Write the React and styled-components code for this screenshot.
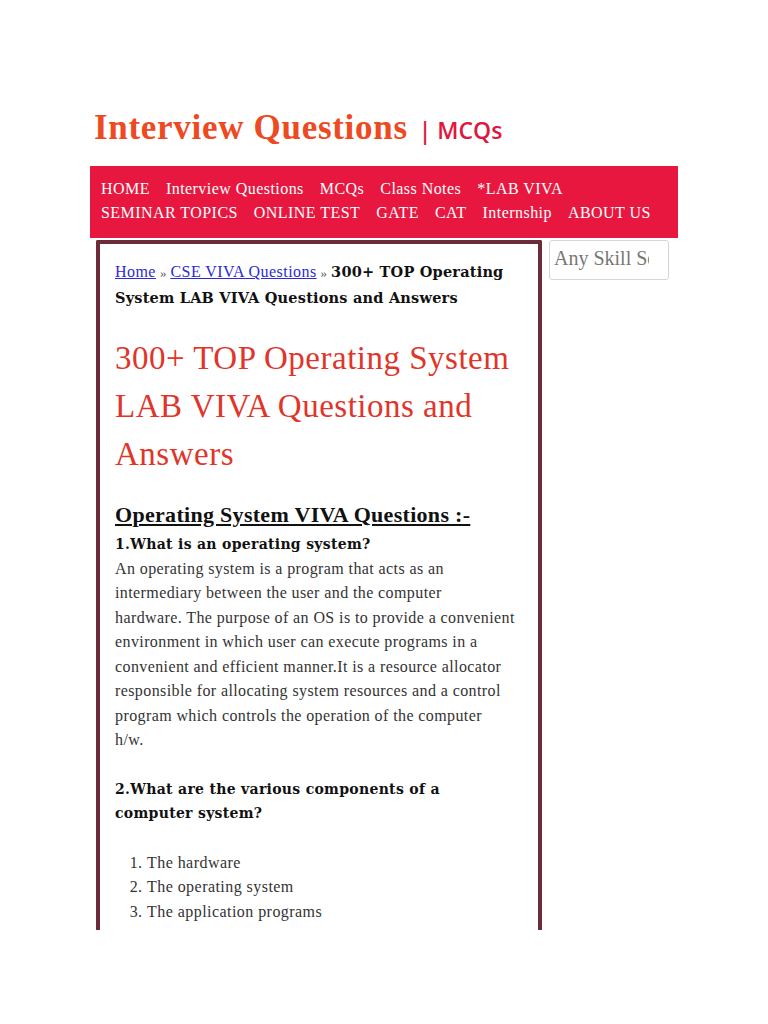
import React from "react";
import styled, { createGlobalStyle } from "styled-components";

const Global = createGlobalStyle`
  body {
    margin: 0;
    background: #ffffff;
    font-family: "Liberation Serif", serif;
  }
`;

const Page = styled.div`
  width: 768px;
  height: 930px;
  overflow: hidden;
  padding: 0 90px;
  box-sizing: border-box;
`;

const Header = styled.div`
  display: flex;
  align-items: baseline;
  padding: 108px 0 0 4px;
  height: 166px;
  box-sizing: border-box;
`;

const SiteTitle = styled.span`
  font-family: "Liberation Serif", serif;
  font-weight: bold;
  font-size: 35px;
  letter-spacing: 0.7px;
  color: #ee4a22;
`;

const Tagline = styled.span`
  font-family: "Open Sans", sans-serif;
  font-weight: 600;
  font-size: 23px;
  color: #e0163e;
  margin-left: 11px;
`;

const Nav = styled.nav`
  background: #e8173f;
  width: 588px;
  height: 72px;
  box-sizing: border-box;
  padding: 11px 10px 0 11px;
`;

const NavRow = styled.div`
  display: flex;
  column-gap: 16px;
`;

const NavItem = styled.span`
  color: #ffffff;
  font-size: 16px;
  line-height: 24px;
  letter-spacing: 0.45px;
  font-family: "Liberation Serif", serif;
  white-space: nowrap;
`;

const Body = styled.div`
  display: flex;
  align-items: flex-start;
  gap: 7px;
  padding: 2px 0 0 6px;
`;

const Card = styled.div`
  width: 446px;
  height: 720px;
  box-sizing: border-box;
  border: 4px solid #6d2a38;
  border-bottom: none;
  border-radius: 2px 2px 0 0;
  padding: 15px 16px 0 15px;
`;

const Crumbs = styled.div`
  font-size: 16px;
  line-height: 25px;
  color: #222;
`;

const Link = styled.a`
  color: #2a2ad8;
  text-decoration: underline;
  letter-spacing: 0.45px;
`;

const Sep = styled.span`
  color: #555;
  font-size: 13px;
  line-height: 25px;
`;

const Current = styled.b`
  font-family: "DejaVu Serif", serif;
  font-size: 14.5px;
  line-height: 25px;
  letter-spacing: 0.2px;
  color: #111;
`;

const Heading = styled.h1`
  font-family: "Liberation Serif", serif;
  font-weight: normal;
  font-size: 33px;
  line-height: 48px;
  letter-spacing: 0.5px;
  color: #e0352a;
  margin: 24px 0 24px;
`;

const Section = styled.h2`
  font-family: "Liberation Serif", serif;
  font-weight: bold;
  font-size: 22px;
  line-height: 26px;
  letter-spacing: 0.3px;
  text-decoration: underline;
  color: #111;
  margin: 0;
`;

const Question = styled.h3`
  font-family: "DejaVu Serif", serif;
  font-weight: bold;
  font-size: 14px;
  line-height: 24.5px;
  letter-spacing: 0.3px;
  color: #111;
  margin: ${(p) => p.$top || 0}px 0 0;
`;

const Para = styled.p`
  font-size: 16px;
  line-height: 24.5px;
  letter-spacing: 0.4px;
  color: #333;
  margin: 0;
`;

const Line = styled.span`
  display: block;
  white-space: nowrap;
`;

const List = styled.ol`
  margin: 25px 0 0;
  padding-left: 32px;
  font-size: 16px;
  line-height: 24.5px;
  letter-spacing: 0.45px;
  color: #333;
`;

const Search = styled.div`
  width: 120px;
  height: 40px;
  box-sizing: border-box;
  border: 1px solid #d6d6d6;
  border-radius: 3px;
  padding: 6px 0 0 4px;
`;

const Placeholder = styled.div`
  width: 95px;
  overflow: hidden;
  white-space: nowrap;
  color: #777;
  font-size: 20px;
  font-family: "Liberation Serif", serif;
`;

const navRows = [
  ["HOME", "Interview Questions", "MCQs", "Class Notes", "*LAB VIVA"],
  ["SEMINAR TOPICS", "ONLINE TEST", "GATE", "CAT", "Internship", "ABOUT US"],
];

const answerLines = [
  "An operating system is a program that acts as an",
  "intermediary between the user and the computer",
  "hardware. The purpose of an OS is to provide a convenient",
  "environment in which user can execute programs in a",
  "convenient and efficient manner.It is a resource allocator",
  "responsible for allocating system resources and a control",
  "program which controls the operation of the computer",
  "h/w.",
];

export default function App() {
  return (
    <>
      <Global />
      <Page>
        <Header>
          <SiteTitle>Interview Questions</SiteTitle>
          <Tagline>| MCQs</Tagline>
        </Header>
        <Nav>
          {navRows.map((row, r) => (
            <NavRow key={r}>
              {row.map((n) => (
                <NavItem key={n}>{n}</NavItem>
              ))}
            </NavRow>
          ))}
        </Nav>
        <Body>
          <Card>
            <Crumbs>
              <Link href="#">Home</Link> <Sep>»</Sep>{" "}
              <Link href="#">CSE VIVA Questions</Link> <Sep>»</Sep>{" "}
              <Current>300+ TOP Operating System LAB VIVA Questions and Answers</Current>
            </Crumbs>
            <Heading>300+ TOP Operating System LAB VIVA Questions and Answers</Heading>
            <Section>Operating System VIVA Questions :-</Section>
            <Question $top={4}>1.What is an operating system?</Question>
            <Para>
              {answerLines.map((l) => (
                <Line key={l}>{l}</Line>
              ))}
            </Para>
            <Question $top={24}>2.What are the various components of a computer system?</Question>
            <List>
              <li>The hardware</li>
              <li>The operating system</li>
              <li>The application programs</li>
            </List>
          </Card>
          <Search>
            <Placeholder>Any Skill Search</Placeholder>
          </Search>
        </Body>
      </Page>
    </>
  );
}
